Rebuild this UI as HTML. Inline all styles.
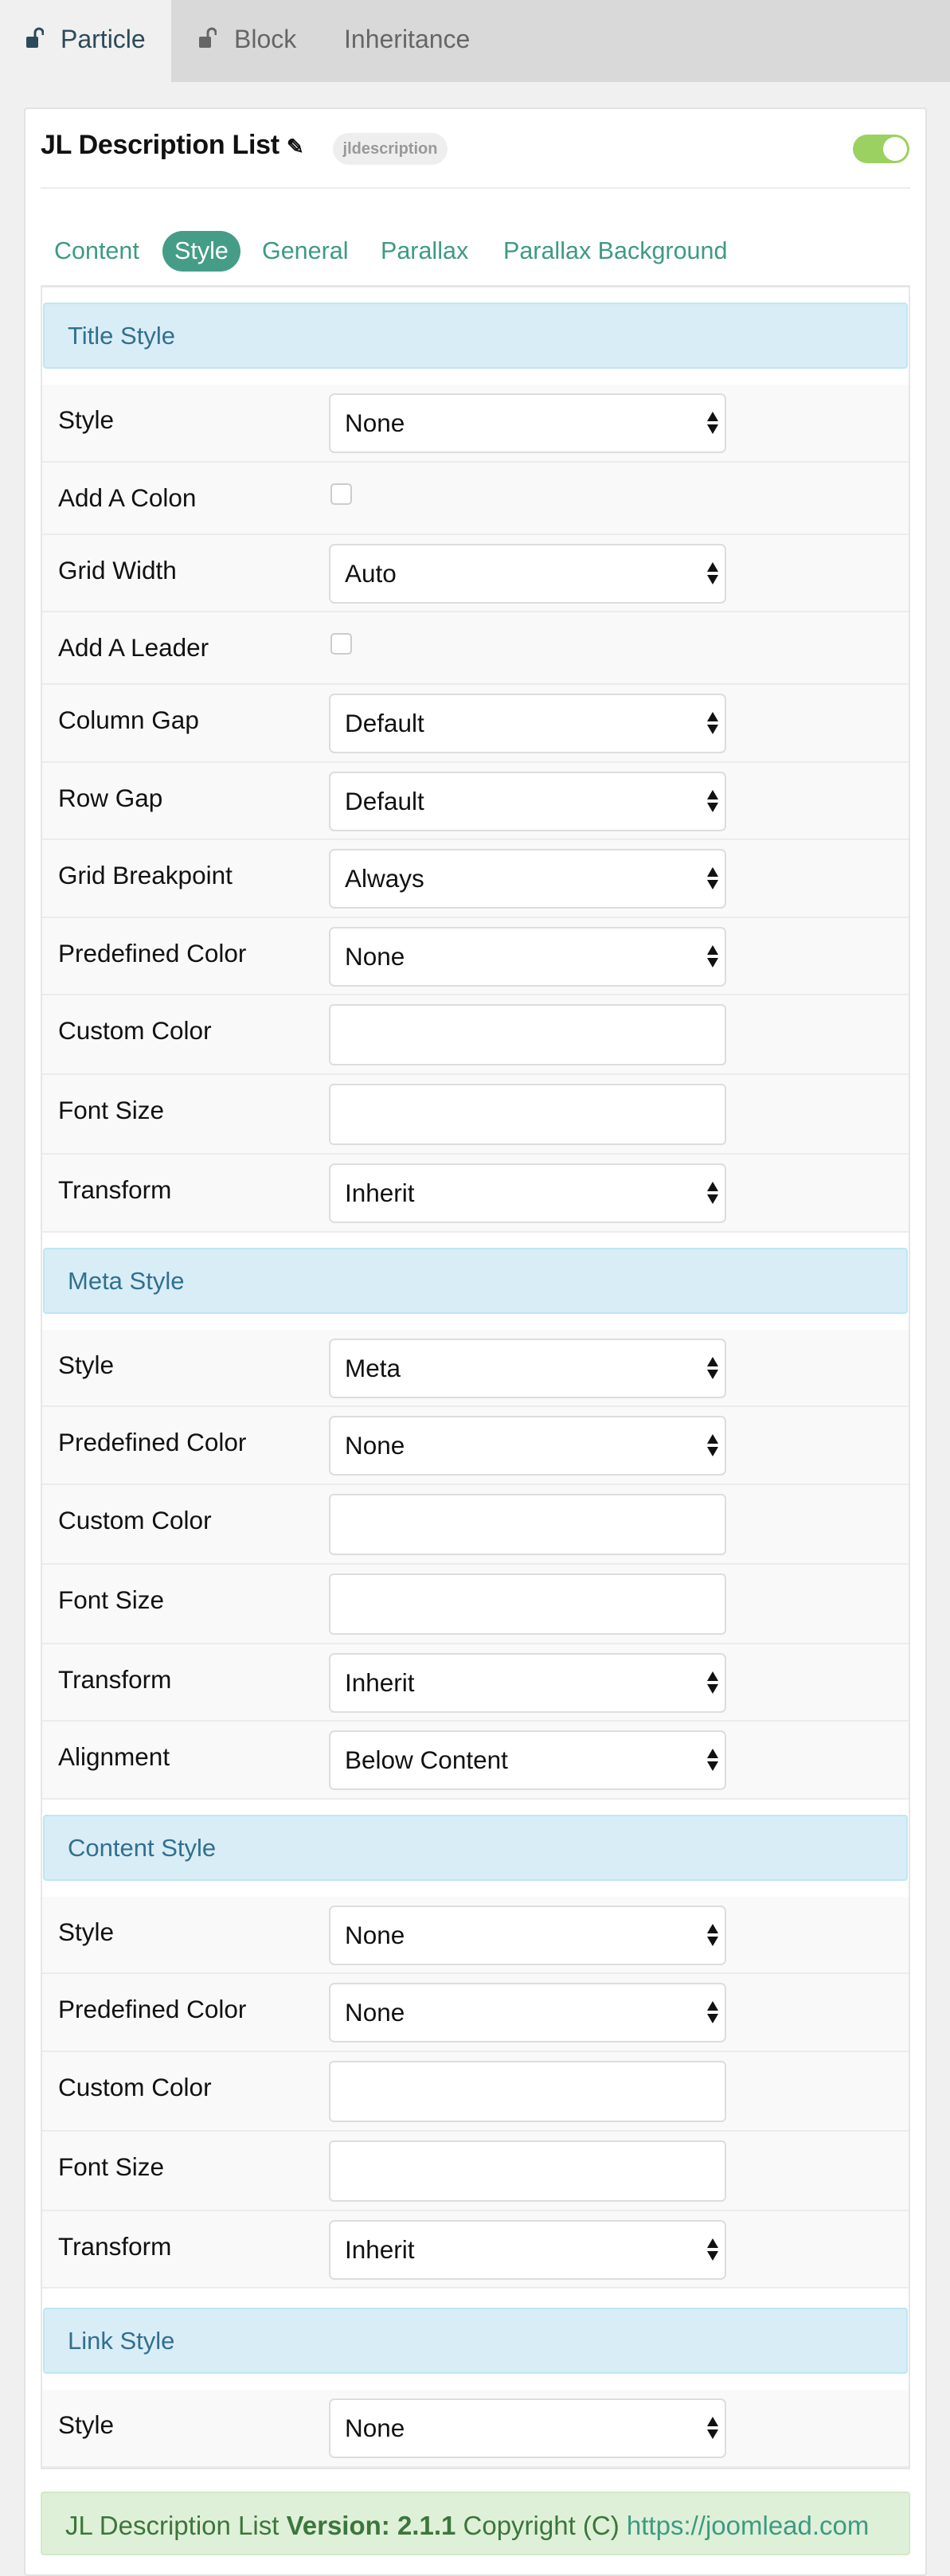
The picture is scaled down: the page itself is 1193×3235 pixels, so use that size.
<!DOCTYPE html>
<html><head><meta charset="utf-8"><style>
*{box-sizing:border-box;margin:0;padding:0}
body{width:1193px;height:3181px;background:#f0f0f0;font-family:"Liberation Sans",sans-serif;position:relative;overflow:hidden}
.tabbar{position:absolute;left:0;top:0;width:1193px;height:103px;background:#d9d9d9}
.tab{position:absolute;top:0;height:103px;font-size:32px;line-height:98px;color:#666}
.tab.active{background:#f0f0f0;color:#2c4a5a;left:0;width:215px}
.lock{position:absolute}
.card{position:absolute;left:30px;top:135px;width:1134px;height:3100px;background:#fff;border:2px solid #e2e2e2;border-radius:4px}
.title{position:absolute;left:51px;top:163px;font-size:34px;font-weight:bold;color:#111;letter-spacing:-0.3px}
.badge{position:absolute;left:418px;top:167px;width:144px;height:40px;border-radius:20px;background:#eee;color:#999;font-size:20px;line-height:40px;text-align:center;font-weight:bold}
.toggle{position:absolute;left:1071px;top:169px;width:71px;height:36px;border-radius:18px;background:#9bd161}
.toggle:after{content:"";position:absolute;right:3px;top:3px;width:30px;height:30px;border-radius:50%;background:#fff}
.divider{position:absolute;left:51px;top:235px;width:1092px;height:2px;background:#ececec}
.stab{position:absolute;top:290px;height:51px;line-height:51px;font-size:30.5px;color:#3e9a83}
.stab.on{background:#459d87;color:#fff;border-radius:26px;padding:0 15px}
.panel{position:absolute;left:51px;top:358px;width:1092px;border:2px solid #e6e6e6;border-top:3px solid #e6e6e6;background:#fff}
.hdr{margin:19px 1px 20px;height:83px;background:#d9edf7;border:2px solid #bce8f1;border-radius:4px;color:#31708f;font-size:31px;line-height:79px;padding-left:29px}
.row{position:relative;background:#f9f9f9;border-bottom:2px solid #ececec;height:97.5px}
.row.c{height:91px}.row.i{height:100px}
.lbl{position:absolute;left:20px;top:26px;font-size:31.5px;color:#111}
.sel{position:absolute;left:360px;top:11px;width:499px;height:75px;background:#fff;border:2px solid #ddd;border-radius:7px;font-size:31.5px;line-height:71px;padding-left:18px;color:#111}
.sel:after{content:"";position:absolute;right:8px;top:21px;width:0;height:0;border-left:7px solid transparent;border-right:7px solid transparent;border-bottom:12px solid #111}
.sel:before{content:"";position:absolute;right:8px;top:37px;width:0;height:0;border-left:7px solid transparent;border-right:7px solid transparent;border-top:12px solid #111}
.inp{position:absolute;left:360px;top:11px;width:499px;height:77px;background:#fff;border:2px solid #ddd;border-radius:6px}
.chk{position:absolute;left:362px;top:26px;width:27px;height:27px;border:2px solid #ccc;border-radius:5px;background:#fff}
.footer{position:absolute;left:51px;top:3129px;width:1092px;height:80px;background:#dff0d8;border:2px solid #d0e9c6;border-radius:4px;color:#3c763d;font-size:33px;padding:22px 0 0 29px;white-space:nowrap}
.footer a{color:#3e9a83;text-decoration:none}
</style></head><body>
<div class="tabbar">
 <div class="tab active"><svg class="lock" style="left:33px;top:34px" width="22" height="28" viewBox="0 0 22 28"><path d="M11 13V7a5 5 0 0 1 10 0v3" fill="none" stroke="#2c4a5a" stroke-width="3"/><rect x="0" y="12" width="15" height="14" rx="2" fill="#2c4a5a"/></svg><span style="position:absolute;left:76px">Particle</span></div>
 <div class="tab" style="left:250px"><svg class="lock" style="left:0;top:34px" width="22" height="28" viewBox="0 0 22 28"><path d="M11 13V7a5 5 0 0 1 10 0v3" fill="none" stroke="#666" stroke-width="3"/><rect x="0" y="12" width="15" height="14" rx="2" fill="#666"/></svg><span style="position:absolute;left:44px">Block</span></div>
 <div class="tab" style="left:432px">Inheritance</div>
</div>
<div class="card"></div>
<div class="title">JL Description List <span style="font-size:26px">&#9998;</span></div>
<div class="badge">jldescription</div>
<div class="toggle"></div>
<div class="divider"></div>
<div class="stab" style="left:68px">Content</div>
<div class="stab on" style="left:204px">Style</div>
<div class="stab" style="left:329px">General</div>
<div class="stab" style="left:478px">Parallax</div>
<div class="stab" style="left:632px">Parallax Background</div>

<div class="panel">
 <div class="hdr">Title Style</div>
 <div class="row"><div class="lbl">Style</div><div class="sel">None</div></div>
 <div class="row c"><div class="lbl">Add A Colon</div><div class="chk"></div></div>
 <div class="row"><div class="lbl">Grid Width</div><div class="sel">Auto</div></div>
 <div class="row c"><div class="lbl">Add A Leader</div><div class="chk"></div></div>
 <div class="row"><div class="lbl">Column Gap</div><div class="sel">Default</div></div>
 <div class="row"><div class="lbl">Row Gap</div><div class="sel">Default</div></div>
 <div class="row"><div class="lbl">Grid Breakpoint</div><div class="sel">Always</div></div>
 <div class="row"><div class="lbl">Predefined Color</div><div class="sel">None</div></div>
 <div class="row i"><div class="lbl">Custom Color</div><div class="inp"></div></div>
 <div class="row i"><div class="lbl">Font Size</div><div class="inp"></div></div>
 <div class="row"><div class="lbl">Transform</div><div class="sel">Inherit</div></div>
 <div class="hdr">Meta Style</div>
 <div class="row"><div class="lbl">Style</div><div class="sel">Meta</div></div>
 <div class="row"><div class="lbl">Predefined Color</div><div class="sel">None</div></div>
 <div class="row i"><div class="lbl">Custom Color</div><div class="inp"></div></div>
 <div class="row i"><div class="lbl">Font Size</div><div class="inp"></div></div>
 <div class="row"><div class="lbl">Transform</div><div class="sel">Inherit</div></div>
 <div class="row"><div class="lbl">Alignment</div><div class="sel">Below Content</div></div>
 <div class="hdr">Content Style</div>
 <div class="row"><div class="lbl">Style</div><div class="sel">None</div></div>
 <div class="row"><div class="lbl">Predefined Color</div><div class="sel">None</div></div>
 <div class="row i"><div class="lbl">Custom Color</div><div class="inp"></div></div>
 <div class="row i"><div class="lbl">Font Size</div><div class="inp"></div></div>
 <div class="row"><div class="lbl">Transform</div><div class="sel">Inherit</div></div>
 <div class="hdr" style="margin-top:24px">Link Style</div>
 <div class="row"><div class="lbl">Style</div><div class="sel">None</div></div>
</div>
<div class="footer">JL Description List <b>Version: 2.1.1</b> Copyright (C) <a>https://joomlead.com</a></div>
</body></html>
